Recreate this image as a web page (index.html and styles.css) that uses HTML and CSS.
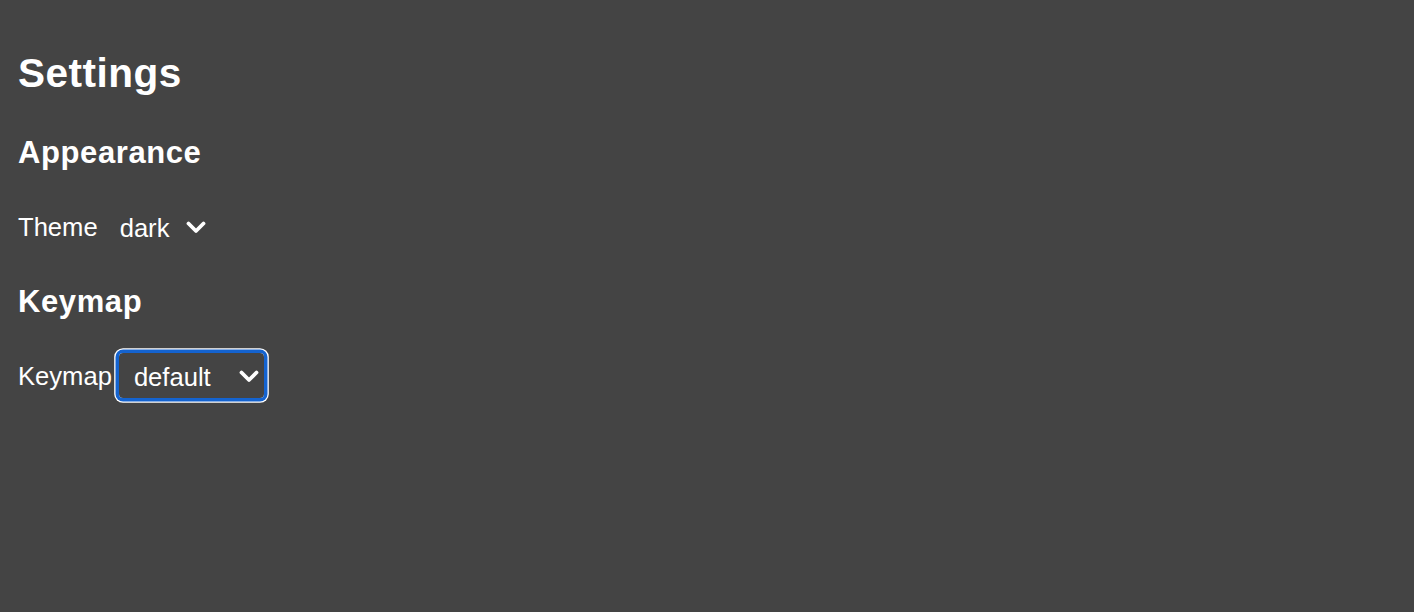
FILE: index.html
```html
<!DOCTYPE html>
<html lang="en">
<head>
<meta charset="utf-8">
<title>Settings</title>
<link rel="stylesheet" href="styles.css">
</head>
<body>
<main class="settings">
  <h1 class="title">Settings</h1>
  <section class="group">
    <h2 class="group-title">Appearance</h2>
    <div class="row">
      <label class="label" for="theme">Theme</label>
      <span class="select-wrap">
        <select id="theme" class="select select-theme">
          <option>dark</option>
          <option>light</option>
        </select>
        <svg class="chevron" width="20" height="13" viewBox="0 0 20 13" aria-hidden="true"><polyline points="2.5,2.5 10,10 17.5,2.5" fill="none" stroke="#fff" stroke-width="3.8" stroke-linecap="round" stroke-linejoin="round"/></svg>
      </span>
    </div>
  </section>
  <section class="group">
    <h2 class="group-title">Keymap</h2>
    <div class="row">
      <label class="label" for="keymap">Keymap</label>
      <span class="select-wrap">
        <select id="keymap" class="select select-keymap is-focused">
          <option>default</option>
          <option>vim</option>
          <option>emacs</option>
        </select>
        <svg class="chevron" width="20" height="13" viewBox="0 0 20 13" aria-hidden="true"><polyline points="2.5,2.5 10,10 17.5,2.5" fill="none" stroke="#fff" stroke-width="3.8" stroke-linecap="round" stroke-linejoin="round"/></svg>
      </span>
    </div>
  </section>
</main>
</body>
</html>
```

FILE: styles.css
```css
html, body {
  margin: 0;
  padding: 0;
  background: #444444;
}

body {
  color: #ffffff;
  font-family: "Liberation Sans", Arial, Helvetica, sans-serif;
  min-height: 612px;
}

.settings {
  padding: 50.5px 18px 0;
}

.title {
  margin: 0 0 39px;
  font-size: 40.5px;
  line-height: 45px;
  font-weight: 700;
  letter-spacing: 0.5px;
}

.group-title {
  margin: 0 0 33.5px;
  font-size: 31px;
  line-height: 36px;
  font-weight: 700;
  letter-spacing: 0.6px;
}

.row {
  display: flex;
  align-items: center;
  gap: 7px;
  margin: 0 0 34.5px;
}

.label {
  font-size: 25.6px;
  line-height: 28.6px;
  padding-top: 2px;
}

.select-wrap {
  position: relative;
  display: inline-flex;
}

.select {
  -webkit-appearance: none;
  appearance: none;
  box-sizing: border-box;
  height: 45px;
  margin: 0;
  padding: 2px 0 0 15px;
  font-family: inherit;
  font-size: 25.6px;
  color: #ffffff;
  background: transparent;
  border: 0;
  border-radius: 4px;
  outline: none;
}

.select option {
  color: #000000;
}

.select-theme {
  width: 106px;
}

.select-keymap {
  width: 145px;
}

.select.is-focused {
  box-shadow: 0 0 0 3.5px #1463cf, 0 0 0 4.8px #ffffff;
}

.chevron {
  position: absolute;
  right: 5px;
  top: 50%;
  margin-top: -6px;
  pointer-events: none;
}
```
